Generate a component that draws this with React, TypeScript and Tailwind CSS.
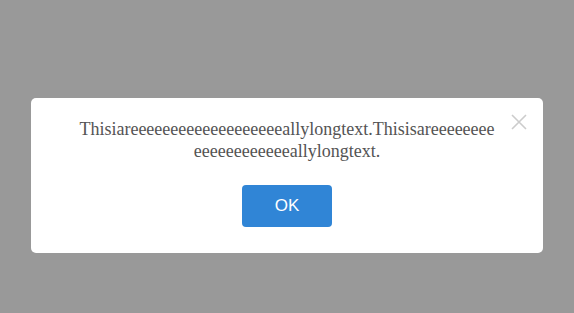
export default function App() {
  return (
    <div className="min-h-screen bg-[#999999] flex justify-center pt-[98px]">
      <div className="relative w-[512px] h-[155px] bg-white rounded-[5px] px-12 pt-5 flex flex-col items-center">
        <button
          aria-label="Close"
          className="absolute top-4 right-4 w-4 h-4 text-[#cccccc]"
        >
          <svg viewBox="0 0 16 16" width="16" height="16" fill="none" stroke="currentColor" strokeWidth="1.6">
            <path d="M1 1 L15 15 M15 1 L1 15" />
          </svg>
        </button>
        <p className="w-full text-center break-all text-[18px] leading-[22px] text-[#545454] font-['Liberation_Serif','Times_New_Roman',serif]">
          Thisiareeeeeeeeeeeeeeeeeeeallylongtext.Thisisareeeeeeeeeeeeeeeeeeeeallylongtext.
        </p>
        <button className="mt-[23px] w-[90px] h-[42px] rounded-[4px] bg-[#3085d6] text-white text-[17px] font-['Liberation_Sans',sans-serif]">
          OK
        </button>
      </div>
    </div>
  );
}
